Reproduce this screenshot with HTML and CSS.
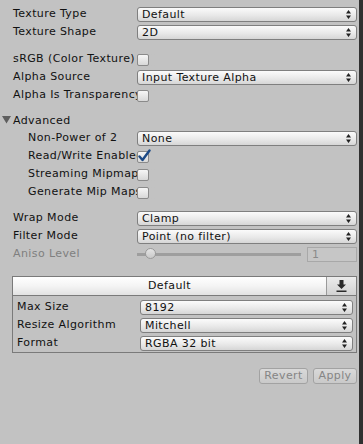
FILE: index.html
```html
<!DOCTYPE html>
<html>
<head>
<meta charset="utf-8">
<link rel="stylesheet" href="styles.css">
</head>
<body>
<div class="inspector">
  <div class="panel">
    <div class="row"><span class="label">Texture Type</span><div class="popup"><span class="ptext">Default</span><svg class="arrows" width="5" height="9" viewBox="0 0 5 9"><path d="M0 3.5 L2.5 0 L5 3.5 Z M0 5.5 L2.5 9 L5 5.5 Z" fill="#222"/></svg></div></div>
    <div class="row"><span class="label">Texture Shape</span><div class="popup"><span class="ptext">2D</span><svg class="arrows" width="5" height="9" viewBox="0 0 5 9"><path d="M0 3.5 L2.5 0 L5 3.5 Z M0 5.5 L2.5 9 L5 5.5 Z" fill="#222"/></svg></div></div>

    <div class="group">
      <div class="row"><span class="label">sRGB (Color Texture)</span><span class="check"></span></div>
      <div class="row"><span class="label">Alpha Source</span><div class="popup"><span class="ptext">Input Texture Alpha</span><svg class="arrows" width="5" height="9" viewBox="0 0 5 9"><path d="M0 3.5 L2.5 0 L5 3.5 Z M0 5.5 L2.5 9 L5 5.5 Z" fill="#222"/></svg></div></div>
      <div class="row"><span class="label">Alpha Is Transparency</span><span class="check"></span></div>
    </div>

    <div class="group advanced-group">
      <div class="row foldout"><svg class="tri" width="9" height="8" viewBox="0 0 9 8"><path d="M0 0 L9 0 L4.5 7.5 Z" fill="#5e5e5e"/></svg><span>Advanced</span></div>
      <div class="row indent"><span class="label">Non-Power of 2</span><div class="popup"><span class="ptext">None</span><svg class="arrows" width="5" height="9" viewBox="0 0 5 9"><path d="M0 3.5 L2.5 0 L5 3.5 Z M0 5.5 L2.5 9 L5 5.5 Z" fill="#222"/></svg></div></div>
      <div class="row indent"><span class="label">Read/Write Enabled</span><span class="check"><svg class="tick" width="14" height="14" viewBox="0 0 14 14"><path d="M2.5 7.5 L5.5 11 L12.5 1.5" fill="none" stroke="#1d4a86" stroke-width="2.4" stroke-linecap="round" stroke-linejoin="round"/></svg></span></div>
      <div class="row indent"><span class="label">Streaming Mipmaps</span><span class="check"></span></div>
      <div class="row indent"><span class="label">Generate Mip Maps</span><span class="check"></span></div>
    </div>

    <div class="group wrap-group">
      <div class="row"><span class="label">Wrap Mode</span><div class="popup"><span class="ptext">Clamp</span><svg class="arrows" width="5" height="9" viewBox="0 0 5 9"><path d="M0 3.5 L2.5 0 L5 3.5 Z M0 5.5 L2.5 9 L5 5.5 Z" fill="#222"/></svg></div></div>
      <div class="row"><span class="label">Filter Mode</span><div class="popup"><span class="ptext">Point (no filter)</span><svg class="arrows" width="5" height="9" viewBox="0 0 5 9"><path d="M0 3.5 L2.5 0 L5 3.5 Z M0 5.5 L2.5 9 L5 5.5 Z" fill="#222"/></svg></div></div>
      <div class="row"><span class="label disabled">Aniso Level</span><div class="slider"><span class="knob"></span></div><div class="numfield">1</div></div>
    </div>

    <div class="platform">
      <div class="ptabs">
        <div class="ptab">Default</div>
        <div class="pbtn"><svg width="11" height="12" viewBox="0 0 11 12"><path d="M3.5 0 H7.5 V4.5 H10 L5.5 9 L1 4.5 H3.5 Z" fill="#2a2a2a"/><rect x="0.5" y="10.5" width="10" height="1.5" fill="#2a2a2a"/></svg></div>
      </div>
      <div class="pbody">
        <div class="row prow"><span class="label">Max Size</span><div class="popup"><span class="ptext">8192</span><svg class="arrows" width="5" height="9" viewBox="0 0 5 9"><path d="M0 3.5 L2.5 0 L5 3.5 Z M0 5.5 L2.5 9 L5 5.5 Z" fill="#222"/></svg></div></div>
        <div class="row prow"><span class="label">Resize Algorithm</span><div class="popup"><span class="ptext">Mitchell</span><svg class="arrows" width="5" height="9" viewBox="0 0 5 9"><path d="M0 3.5 L2.5 0 L5 3.5 Z M0 5.5 L2.5 9 L5 5.5 Z" fill="#222"/></svg></div></div>
        <div class="row prow"><span class="label">Format</span><div class="popup"><span class="ptext">RGBA 32 bit</span><svg class="arrows" width="5" height="9" viewBox="0 0 5 9"><path d="M0 3.5 L2.5 0 L5 3.5 Z M0 5.5 L2.5 9 L5 5.5 Z" fill="#222"/></svg></div></div>
      </div>
    </div>

    <div class="buttons">
      <div class="btn revert">Revert</div>
      <div class="btn apply">Apply</div>
    </div>
  </div>
  <div class="edge"></div>
</div>
</body>
</html>
```

FILE: styles.css
```css
html, body {
  margin: 0;
  padding: 0;
  height: 100%;
  background: #c2c2c2;
}

body {
  font-family: "DejaVu Sans", Verdana, sans-serif;
  font-size: 11px;
  letter-spacing: 0.4px;
  color: #111;
}

.inspector {
  display: flex;
  height: 100%;
}

.panel {
  flex: 1;
  padding: 5px 2px 0 0;
  min-width: 0;
}

.edge {
  width: 4px;
  background: #303030;
}

.group {
  margin-top: 9px;
}

.advanced-group {
  margin-top: 7px;
}

.wrap-group {
  margin-top: 8px;
}

.row {
  display: flex;
  align-items: center;
  height: 18px;
  padding-left: 13px;
}

.row.indent {
  padding-left: 28px;
}

.row.indent .label {
  width: 109px;
}

.label {
  width: 124px;
  flex: none;
  white-space: nowrap;
  overflow: visible;
  line-height: 18px;
}

.label.disabled {
  color: #7f7f7f;
}

.foldout {
  padding-left: 2px;
}

.foldout .tri {
  margin-right: 2px;
  margin-top: -1px;
}

.popup {
  position: relative;
  flex: 1;
  height: 15px;
  box-sizing: border-box;
  border: 1px solid #7f7f7f;
  border-radius: 3px;
  background: linear-gradient(#fbfbfb, #e9e9e9 55%, #d6d6d6);
  display: flex;
  align-items: center;
  padding: 0 5px 0 4px;
  min-width: 0;
}

.ptext {
  flex: 1;
  white-space: nowrap;
  overflow: hidden;
  line-height: 13px;
}

.arrows {
  flex: none;
}

.check {
  position: relative;
  width: 12px;
  height: 12px;
  box-sizing: border-box;
  border: 1px solid #8a8a8a;
  border-radius: 2px;
  background: linear-gradient(#f6f6f6, #d8d8d8);
  margin-top: 2px;
  flex: none;
  box-shadow: 3px 0 0 #c2c2c2, 6px 0 0 #c2c2c2;
}

.tick {
  position: absolute;
  left: -1px;
  top: -3px;
}

.slider {
  position: relative;
  width: 164px;
  height: 18px;
  flex: none;
  background: linear-gradient(#9e9e9e, #9e9e9e) no-repeat 0 8px / 100% 3px;
  border-radius: 2px;
}

.knob {
  position: absolute;
  left: 8px;
  top: 3px;
  width: 11px;
  height: 11px;
  box-sizing: border-box;
  border-radius: 50%;
  border: 1px solid #9a9a9a;
  background: linear-gradient(#e4e4e4, #c9c9c9);
}

.numfield {
  margin-left: 6px;
  flex: 1;
  height: 15px;
  box-sizing: border-box;
  border: 1px solid #a8a8a8;
  background: #c6c6c6;
  color: #8a8a8a;
  padding-left: 4px;
  line-height: 13px;
}

.platform {
  margin: 13px 0 0 12px;
  border: 1px solid #7a7a7a;
}

.ptabs {
  display: flex;
  height: 18px;
  border-bottom: 1px solid #7a7a7a;
}

.ptab {
  flex: 1;
  text-align: center;
  line-height: 18px;
  background: linear-gradient(#ffffff, #f4f4f4 50%, #e2e2e2);
}

.pbtn {
  width: 29px;
  border-left: 1px solid #9a9a9a;
  background: linear-gradient(#ececec, #d2d2d2);
  display: flex;
  align-items: center;
  justify-content: center;
}

.pbody {
  padding: 2px 3px 0 4px;
}

.row.prow {
  padding-left: 0;
}

.row.prow .label {
  width: 123px;
}

.buttons {
  display: flex;
  justify-content: flex-end;
  gap: 5px;
  margin-top: 15px;
}

.btn {
  height: 16px;
  box-sizing: border-box;
  border: 1px solid #a2a2a2;
  border-radius: 3px;
  background: linear-gradient(#d9d9d9, #c9c9c9);
  color: #858585;
  line-height: 14px;
  text-align: center;
}

.revert {
  width: 49px;
}

.apply {
  width: 44px;
}
```
